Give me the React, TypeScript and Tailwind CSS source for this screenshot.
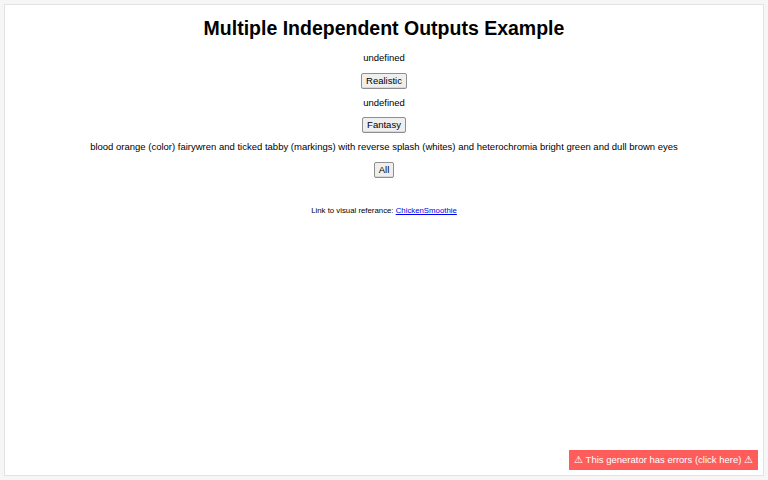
import React from 'react';

const btn =
    'h-[16px] px-[4px] text-[9.5px] leading-none text-black bg-[#efefef] border border-[#8f8f8f] rounded-[2px] shadow-[inset_0_-1px_0_#d8d8d8]';

export default function App() {
    return (
        <div className="w-[768px] h-[480px] bg-[#f6f6f6] p-[4px] font-['Liberation_Sans',Arial,sans-serif] text-black">
            <div className="relative h-[472px] bg-white border border-[#e3e3e3] flex flex-col items-center">
                {/* Header */}
                <h1 className="mt-[11px] text-[19.5px] leading-[24px] font-bold">Multiple Independent Outputs Example</h1>

                {/* Outputs */}
                <p className="mt-[12px] text-[9.5px] leading-[12px]">undefined</p>
                <button className={`mt-[9px] ${btn}`}>Realistic</button>
                <p className="mt-[8px] text-[9.5px] leading-[12px]">undefined</p>
                <button className={`mt-[8px] ${btn}`}>Fantasy</button>
                <p className="mt-[8px] text-[9.5px] leading-[12px]">
                    blood orange (color) fairywren and ticked tabby (markings) with reverse splash (whites) and heterochromia bright green and dull brown eyes
                </p>
                <button className={`mt-[9px] ${btn}`}>All</button>

                <p className="mt-[28px] text-[7.8px] leading-[10px]">
                    Link to visual referance: <a href="#" className="text-[#0000ee] underline">ChickenSmoothie</a>
                </p>

                {/* Error badge */}
                <div className="absolute right-[5px] bottom-[5px] h-[20px] px-[5px] flex items-center bg-[#ff5c5c] text-white text-[9.5px]">
                    ⚠ This generator has errors (click here) ⚠
                </div>
            </div>
        </div>
    );
}
